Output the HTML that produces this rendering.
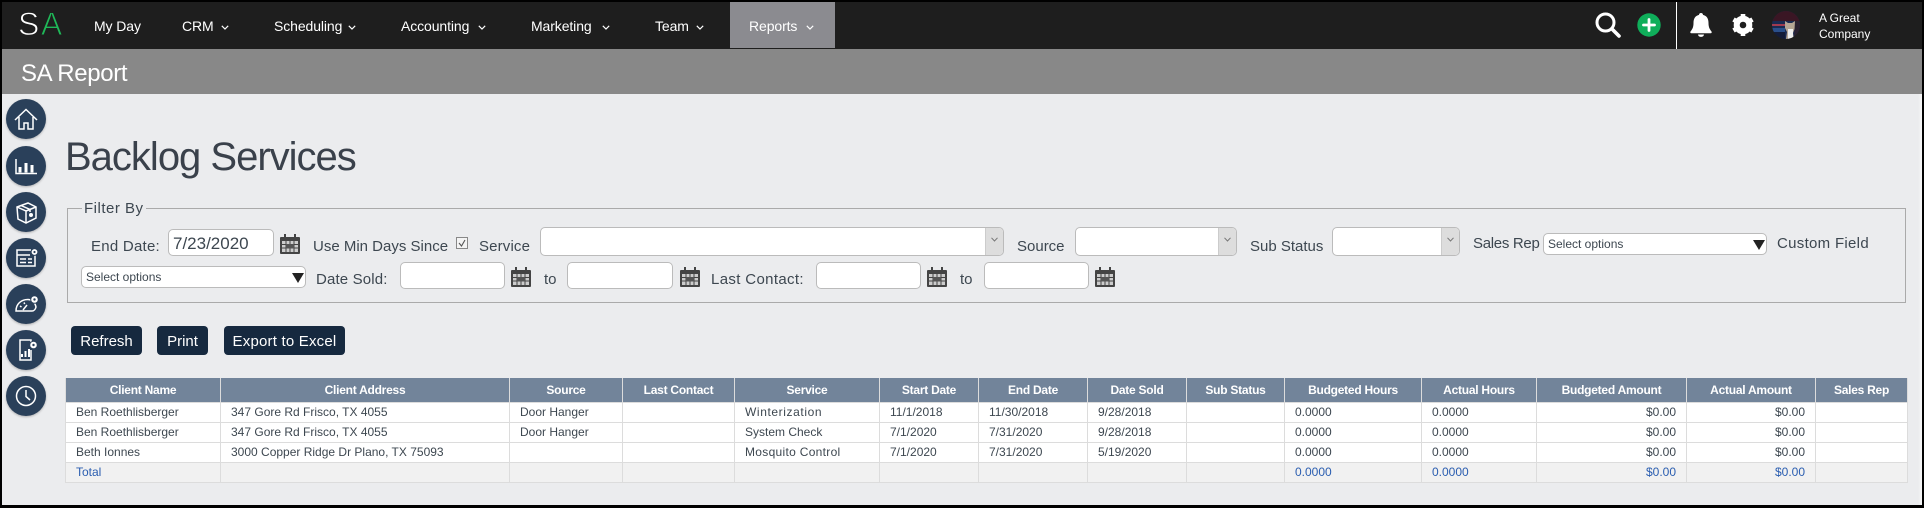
<!DOCTYPE html>
<html lang="en">
<head>
<meta charset="utf-8">
<title>Backlog Services</title>
<style>
html,body{margin:0;padding:0;width:1924px;height:508px;overflow:hidden;background:#000}
body{position:relative;font-family:"Liberation Sans",sans-serif;color:#3d4750}
.a{position:absolute;white-space:nowrap}
#content{position:absolute;left:2px;top:94px;width:1920px;height:411px;background:#ebecee}
#nav{position:absolute;left:2px;top:2px;width:1920px;height:47px;background:#1e1e1e}
#sub{position:absolute;left:2px;top:49px;width:1920px;height:45px;background:#888}
.n{top:16px;height:20px;line-height:20px;font-size:14px;color:#fff;letter-spacing:-.1px}
.chev{position:absolute;top:25px;width:8px;height:5px}
.c{position:absolute;left:6px;width:40px;height:40px;border-radius:50%;background:#2a405a;box-shadow:0 1px 2px rgba(0,0,0,.25)}
.c svg{position:absolute;left:0;top:0;width:40px;height:40px;fill:none;stroke:#fff;stroke-width:1.5}
.l{font-size:15px;height:20px;line-height:20px;color:#3d4750}
.i{position:absolute;box-sizing:border-box;background:#fff;border:1px solid #bbb;border-radius:5px;font-size:17px;line-height:27px;padding-left:4px;color:#3d4750}
.s{position:absolute;box-sizing:border-box;height:29px;top:227px;background:#fff;border:1px solid #bbb;border-radius:5px;overflow:hidden}
.s b{position:absolute;right:0;top:0;bottom:0;width:17px;background:#ddd;border-left:1px solid #ccc}
.s svg{position:absolute;right:5px;top:9px;width:7px;height:5px}
.m{position:absolute;box-sizing:border-box;height:22px;background:#fff;border:1px solid #bbb;border-radius:5px;font-size:12px;line-height:21px;padding-left:4px;color:#3d4750}
.m i{position:absolute;right:1px;top:6px;width:0;height:0;border-left:6px solid transparent;border-right:6px solid transparent;border-top:10px solid #222}
.cal{position:absolute;width:20px;height:20px}
.btn{position:absolute;top:326px;height:29px;line-height:31px;background:#16293f;color:#fff;border-radius:4px;font-size:15px;text-align:center}
table{position:absolute;left:65px;top:378px;width:1842px;table-layout:fixed;border-collapse:collapse;font-size:12px;color:#3d4750}
th{height:24px;padding:0;background:#72849a;color:#fff;font-weight:bold;border:1px solid #dcdcdc;border-top:0;border-bottom:0;letter-spacing:-.25px}
td{height:18px;padding:0 10px 1px;border:1px solid #dcdcdc;background:#fff;white-space:nowrap;overflow:hidden}
td.r{text-align:right}
tr.t td{background:#f1f1f1;color:#2a5db0}
</style>
</head>
<body>
<svg width="0" height="0" style="position:absolute">
<symbol id="calico" viewBox="0 0 20 20">
<rect x="0" y="3" width="20" height="17" rx="1" fill="#444"/>
<rect x="4" y="0" width="2" height="5" fill="#444"/><rect x="14" y="0" width="2" height="5" fill="#444"/>
<rect x="2" y="7" width="16" height="11" fill="#ccc"/>
<path d="M2 10.5H18M2 14H18M6 7V18M10 7V18M14 7V18" stroke="#444" stroke-width="1" fill="none"/>
<rect x="6" y="10" width="8" height="4.5" fill="#555"/>
</symbol>
<symbol id="chevw" viewBox="0 0 8 5"><path d="M.8.8 4 4 7.2.8" fill="none" stroke="#fff" stroke-width="1.2"/></symbol>
<symbol id="chevg" viewBox="0 0 7 5"><path d="M.5.8 3.5 4 6.5.8" fill="none" stroke="#777" stroke-width="1"/></symbol>
</svg>

<div id="nav"></div>
<div id="sub"></div>
<div id="content"></div>
<div class="a" style="left:1918px;top:94px;width:4px;height:411px;background:linear-gradient(90deg,#ebecee,#f6f6f6)"></div>

<div class="a" style="left:18px;top:6px;font-size:32px;line-height:36px;height:36px;letter-spacing:1.500px;color:#fff;-webkit-text-stroke:1px #1e1e1e">S<span style="color:#1fb858">A</span></div>

<div class="a n" style="left:94px">My Day</div>
<div class="a n" style="left:182px">CRM</div><svg class="chev" style="left:221px"><use href="#chevw"/></svg>
<div class="a n" style="left:274px">Scheduling</div><svg class="chev" style="left:348px"><use href="#chevw"/></svg>
<div class="a n" style="left:401px">Accounting</div><svg class="chev" style="left:478px"><use href="#chevw"/></svg>
<div class="a n" style="left:531px">Marketing</div><svg class="chev" style="left:602px"><use href="#chevw"/></svg>
<div class="a n" style="left:655px">Team</div><svg class="chev" style="left:696px"><use href="#chevw"/></svg>
<div class="a" style="left:730px;top:2px;width:105px;height:46px;background:#8b8b90"></div>
<div class="a n" style="left:749px">Reports</div><svg class="chev" style="left:806px"><use href="#chevw"/></svg>

<svg class="a" style="left:1595px;top:12px" width="26" height="26" viewBox="0 0 26 26"><circle cx="10.5" cy="10.500" r="8.500" fill="none" stroke="#fff" stroke-width="3"/><path d="M17 17 24 24" stroke="#fff" stroke-width="3.600" stroke-linecap="round"/></svg>
<svg class="a" style="left:1637px;top:13px" width="24" height="24" viewBox="0 0 24 24"><circle cx="12" cy="12" r="11.700" fill="#0fae5a"/><path d="M12 6.500V17.500M6.500 12H17.500" stroke="#fff" stroke-width="2.800" stroke-linecap="round"/></svg>
<div class="a" style="left:1676px;top:2px;width:1px;height:47px;background:#fff"></div>
<svg class="a" style="left:1690px;top:13px" width="22" height="24" viewBox="0 0 22 24"><path d="M11 0c1.200 0 2 .8 2 1.900C17 2.800 18.500 6 18.500 10c0 4 1 6 3 8.500.5.700.2 1.800-.9 1.800H1.400C.3 20.300 0 19.200.5 18.500 2.500 16 3.500 14 3.500 10 3.500 6 5 2.800 9 1.900 9 .8 9.800 0 11 0z" fill="#fff"/><path d="M8 21.500a3 2.400 0 0 0 6 0z" fill="#fff"/></svg>
<svg class="a" style="left:1731px;top:13px" width="24" height="24" viewBox="0 0 24 24"><circle cx="12" cy="12" r="6.300" fill="none" stroke="#fff" stroke-width="6"/><path d="M12 1V5M12 19v4M2.500 6.500l3.400 2M18.100 15.500l3.400 2M2.500 17.500l3.400-2M18.100 8.500l3.400-2" stroke="#fff" stroke-width="4.600"/></svg>
<svg class="a" style="left:1772px;top:11px" width="28" height="28" viewBox="0 0 28 28"><defs><clipPath id="av"><circle cx="14" cy="14" r="14"/></clipPath></defs><g clip-path="url(#av)"><rect width="28" height="28" fill="#1a2a52"/><rect x="0" y="0" width="28" height="10" fill="#3a1624"/><rect x="0" y="13" width="13" height="2" fill="#a03a50"/><rect x="0" y="17" width="13" height="4" fill="#2a4f8a"/><rect x="0" y="21" width="13" height="7" fill="#141c38"/><path d="M13 10l3 2h4l3-2 0 7-2 5 1 6H14l1-7-2-4z" fill="#b5a595"/><path d="M16 18h5v10h-5z" fill="#eee"/><path d="M23 10h5v18h-6z" fill="#2a2030"/></g></svg>
<div class="a" style="left:1819px;top:10px;font-size:12px;line-height:16px;color:#fff">A Great<br>Company</div>

<div class="a" style="left:21px;top:59px;font-size:24px;line-height:30px;color:#fff;letter-spacing:-.35px">SA Report</div>

<div class="c" style="top:99px"><svg viewBox="0 0 40 40"><path d="M9 21 20 10.500 31 21"/><path d="M13 18V30H18V24H22V30H27V18"/></svg></div>
<div class="c" style="top:146px"><svg viewBox="0 0 40 40"><path d="M10 13V27.500H31"/><path d="M14 26.500V21M20 26.500V17M26 26.500V19" stroke-width="3"/></svg></div>
<div class="c" style="top:192px"><svg viewBox="0 0 40 40"><path d="M11 15 22 11 30 15V26L20 31 12 27Z"/><path d="M11 15 20 19V31M20 19 30 15M15 13.500 24 17.500V20"/><circle cx="25" cy="23" r="2" fill="#fff" stroke="none"/></svg></div>
<div class="c" style="top:238px"><svg viewBox="0 0 40 40"><path d="M25 12H11V28H29V17"/><path d="M11 17H24M14 21H20M14 24.500H20M22 21H26M22 24.500H26"/><circle cx="28.500" cy="14" r="3.400" fill="#fff" stroke="#2a405a" stroke-width="1"/><circle cx="28.500" cy="14" r="1.100" fill="#2a405a" stroke="none"/></svg></div>
<div class="c" style="top:284px"><svg viewBox="0 0 40 40"><path d="M10 27C10 20 15 15.500 22 15.500C25 15.500 29 18 30 23C29.500 25 28 27 26 27Z"/><path d="M17 26 21 21M14 22l1.500 1M18 18.500l.7 1.500"/><circle cx="28.500" cy="15.500" r="3.800" fill="#fff" stroke="#2a405a" stroke-width="1"/><circle cx="28.500" cy="15.500" r="1.200" fill="#2a405a" stroke="none"/></svg></div>
<div class="c" style="top:330px"><svg viewBox="0 0 40 40"><path d="M25 13V10H14V30H25V20"/><path d="M16 27V24M19.500 27V21M23 27V19" stroke-width="2"/><circle cx="27.500" cy="15" r="3.800" fill="#fff" stroke="#2a405a" stroke-width="1"/><circle cx="27.500" cy="15" r="1.200" fill="#2a405a" stroke="none"/></svg></div>
<div class="c" style="top:376px"><svg viewBox="0 0 40 40"><circle cx="20" cy="20" r="9.500"/><path d="M20 14V20.500L24 24"/></svg></div>

<div class="a" style="left:65px;top:132px;font-size:40px;line-height:50px;letter-spacing:-1px;color:#3a414b">Backlog Services</div>

<div class="a" style="left:67px;top:208px;width:1839px;height:95px;box-sizing:border-box;border:1px solid #aaa"></div>
<div class="a" style="left:82px;top:199px;padding:0 2px;background:#ebecee;font-size:15px;line-height:20px;letter-spacing:.5px">Filter By</div>

<div class="a l" style="left:91px;top:237px;letter-spacing:.25px">End Date:</div>
<div class="i" style="left:168px;top:229px;width:106px;height:27px">7/23/2020</div>
<svg class="cal" style="left:280px;top:234px"><use href="#calico"/></svg>
<div class="a l" style="left:313px;top:237px">Use Min Days Since</div>
<div class="a" style="left:456px;top:237px;width:10px;height:10px;border:1px solid #888;background:#f4f4f4"><svg width="10" height="10" style="display:block"><path d="M2 5 4.500 8 8 2" fill="none" stroke="#555" stroke-width="1.100"/></svg></div>
<div class="a l" style="left:479px;top:237px;letter-spacing:.15px">Service</div>
<div class="s" style="left:540px;width:464px"><b></b><svg><use href="#chevg"/></svg></div>
<div class="a l" style="left:1017px;top:237px">Source</div>
<div class="s" style="left:1075px;width:162px"><b></b><svg><use href="#chevg"/></svg></div>
<div class="a l" style="left:1250px;top:237px">Sub Status</div>
<div class="s" style="left:1332px;width:128px"><b></b><svg><use href="#chevg"/></svg></div>
<div class="a l" style="left:1473px;top:234px;letter-spacing:-.3px">Sales Rep</div>
<div class="m" style="left:1543px;top:233px;width:224px">Select options<i></i></div>
<div class="a l" style="left:1777px;top:234px;letter-spacing:.3px">Custom Field</div>

<div class="m" style="left:81px;top:266px;width:225px">Select options<i></i></div>
<div class="a l" style="left:316px;top:270px;letter-spacing:.15px">Date Sold:</div>
<div class="i" style="left:400px;top:262px;width:105px;height:27px"></div>
<svg class="cal" style="left:511px;top:267px"><use href="#calico"/></svg>
<div class="a l" style="left:544px;top:270px">to</div>
<div class="i" style="left:567px;top:262px;width:106px;height:27px"></div>
<svg class="cal" style="left:680px;top:267px"><use href="#calico"/></svg>
<div class="a l" style="left:711px;top:270px;letter-spacing:.35px">Last Contact:</div>
<div class="i" style="left:816px;top:262px;width:105px;height:27px"></div>
<svg class="cal" style="left:927px;top:267px"><use href="#calico"/></svg>
<div class="a l" style="left:960px;top:270px">to</div>
<div class="i" style="left:984px;top:262px;width:105px;height:27px"></div>
<svg class="cal" style="left:1095px;top:267px"><use href="#calico"/></svg>

<div class="btn" style="left:71px;width:71px">Refresh</div>
<div class="btn" style="left:157px;width:51px">Print</div>
<div class="btn" style="left:224px;width:121px;letter-spacing:.2px">Export to Excel</div>

<table>
<colgroup><col style="width:155px"><col style="width:289px"><col style="width:113px"><col style="width:112px"><col style="width:145px"><col style="width:99px"><col style="width:109px"><col style="width:99px"><col style="width:98px"><col style="width:137px"><col style="width:115px"><col style="width:150px"><col style="width:129px"><col style="width:92px"></colgroup>
<tr><th>Client Name</th><th>Client Address</th><th>Source</th><th>Last Contact</th><th>Service</th><th>Start Date</th><th>End Date</th><th>Date Sold</th><th>Sub Status</th><th>Budgeted Hours</th><th>Actual Hours</th><th>Budgeted Amount</th><th>Actual Amount</th><th>Sales Rep</th></tr>
<tr><td>Ben Roethlisberger</td><td>347 Gore Rd Frisco, TX 4055</td><td>Door Hanger</td><td></td><td style="letter-spacing:.6px">Winterization</td><td>11/1/2018</td><td>11/30/2018</td><td>9/28/2018</td><td></td><td>0.0000</td><td>0.0000</td><td class="r">$0.00</td><td class="r">$0.00</td><td></td></tr>
<tr><td>Ben Roethlisberger</td><td>347 Gore Rd Frisco, TX 4055</td><td>Door Hanger</td><td></td><td>System Check</td><td>7/1/2020</td><td>7/31/2020</td><td>9/28/2018</td><td></td><td>0.0000</td><td>0.0000</td><td class="r">$0.00</td><td class="r">$0.00</td><td></td></tr>
<tr><td>Beth Ionnes</td><td>3000 Copper Ridge Dr Plano, TX 75093</td><td></td><td></td><td style="letter-spacing:.3px">Mosquito Control</td><td>7/1/2020</td><td>7/31/2020</td><td>5/19/2020</td><td></td><td>0.0000</td><td>0.0000</td><td class="r">$0.00</td><td class="r">$0.00</td><td></td></tr>
<tr class="t"><td>Total</td><td></td><td></td><td></td><td></td><td></td><td></td><td></td><td></td><td>0.0000</td><td>0.0000</td><td class="r">$0.00</td><td class="r">$0.00</td><td></td></tr>
</table>
</body>
</html>
